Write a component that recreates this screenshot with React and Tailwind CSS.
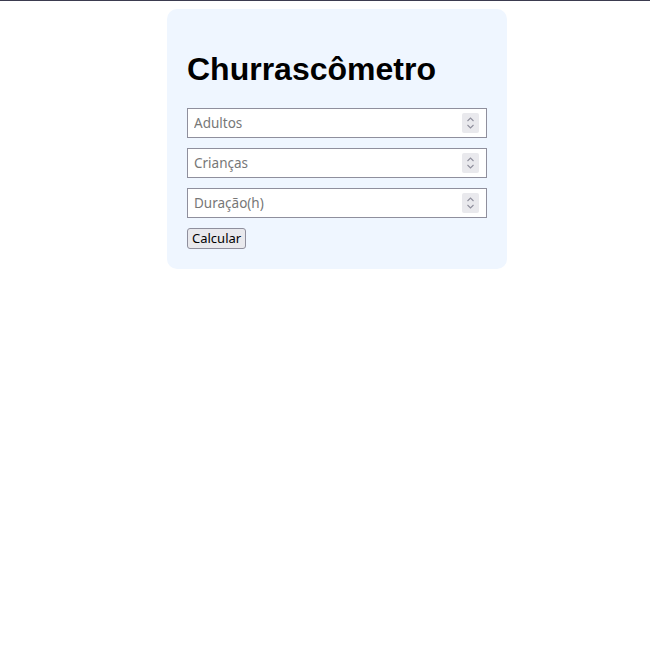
import React from "react";

function Spinner() {
  return (
    <div className="flex h-[20px] w-[17px] items-center justify-center rounded-[2px] bg-[#e9e9ed]">
      <svg width="9" height="14" viewBox="0 0 9 14" fill="none" stroke="#8f8f9d" strokeWidth="1.1">
        <path d="M1.5 5 L4.5 2 L7.5 5" />
        <path d="M1.5 9 L4.5 12 L7.5 9" />
      </svg>
    </div>
  );
}

function NumberField({ placeholder }) {
  return (
    <label className="flex h-[30px] w-[300px] items-center border border-[#8f8f9d] bg-white pl-[6px] pr-[7px]">
      <input
        type="text"
        inputMode="numeric"
        placeholder={placeholder}
        className="min-w-0 flex-1 bg-transparent font-['Noto_Sans',sans-serif] text-[13.5px] text-black outline-none placeholder:text-[#777]"
      />
      <Spinner />
    </label>
  );
}

export default function App() {
  return (
    <div className="min-h-[650px] bg-white">
      <div className="h-px bg-[#3b3b4f]" />
      <div className="ml-[167px] mt-[8px] w-[340px] rounded-[10px] bg-[#eff6ff] px-[20px] pb-[20px] pt-[42px]">
        <h1 className="font-['Liberation_Sans',Arial,sans-serif] text-[32px] font-bold leading-[37px] text-black">
          Churrascômetro
        </h1>
        <div className="mt-[20px] flex flex-col items-start gap-[10px]">
          <NumberField placeholder="Adultos" />
          <NumberField placeholder="Crianças" />
          <NumberField placeholder="Duração(h)" />
          <button className="block h-[21px] rounded-[3px] border border-[#8f8f9d] bg-[#e9e9ed] px-[4px] font-['Noto_Sans',sans-serif] text-[13px] leading-none text-black">
            Calcular
          </button>
        </div>
      </div>
    </div>
  );
}
